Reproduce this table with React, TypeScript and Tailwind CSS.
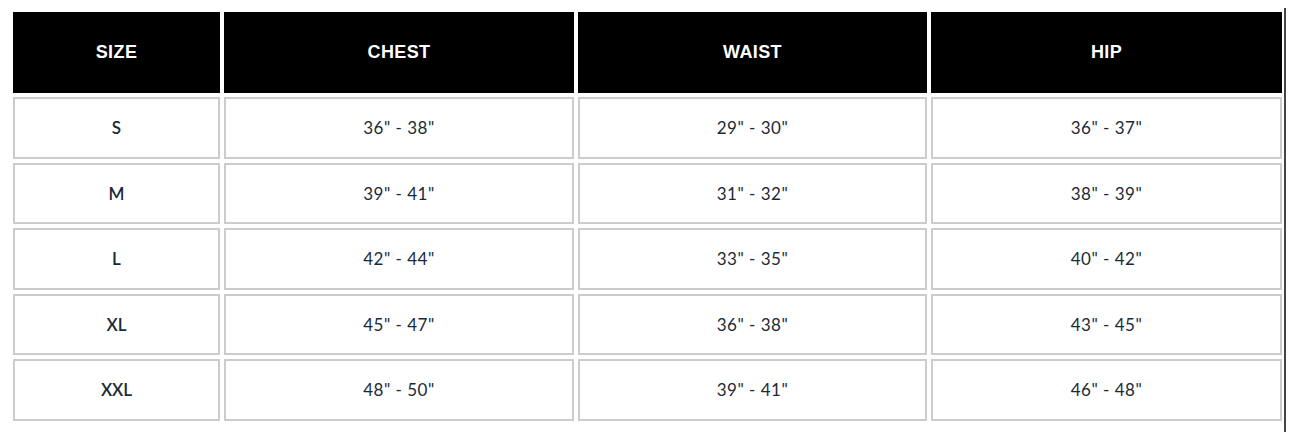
const sizes = [
  { size: 'S', chest: '36" - 38"', waist: '29" - 30"', hip: '36" - 37"' },
  { size: 'M', chest: '39" - 41"', waist: '31" - 32"', hip: '38" - 39"' },
  { size: 'L', chest: '42" - 44"', waist: '33" - 35"', hip: '40" - 42"' },
  { size: 'XL', chest: '45" - 47"', waist: '36" - 38"', hip: '43" - 45"' },
  { size: 'XXL', chest: '48" - 50"', waist: '39" - 41"', hip: '46" - 48"' },
];

const headers = ['SIZE', 'CHEST', 'WAIST', 'HIP'];

export default function App() {
  return (
    <div className="bg-white min-h-[432px] pt-2">
      {/* chart wrapper, dark edge on the right */}
      <div className="w-[1286px] min-h-[424px] border-r-2 border-[#454545] pl-[9px]">
        <table className="w-[1277px] table-fixed border-separate border-spacing-1">
          <colgroup>
            <col className="w-[207px]" />
            <col className="w-[350px]" />
            <col className="w-[349px]" />
            <col className="w-[351px]" />
          </colgroup>
          <thead>
            <tr>
              {headers.map((h) => (
                <th
                  key={h}
                  className="h-[81px] bg-black text-white text-center align-middle font-bold text-[18px] tracking-[0.4px] font-['Liberation_Sans',Arial,sans-serif]"
                >
                  {h}
                </th>
              ))}
            </tr>
          </thead>
          <tbody className="font-['Lato','Noto_Sans',sans-serif] text-[#1b2a38] text-[17px]">
            {sizes.map((row) => (
              <tr key={row.size}>
                <td className="h-[61.5px] border-2 border-[#cccccc] text-center align-middle font-semibold text-[17px]">
                  {row.size}
                </td>
                <td className="h-[61.5px] border-2 border-[#cccccc] text-center align-middle tracking-[0.5px]">
                  {row.chest}
                </td>
                <td className="h-[61.5px] border-2 border-[#cccccc] text-center align-middle tracking-[0.5px]">
                  {row.waist}
                </td>
                <td className="h-[61.5px] border-2 border-[#cccccc] text-center align-middle tracking-[0.5px]">
                  {row.hip}
                </td>
              </tr>
            ))}
          </tbody>
        </table>
      </div>
    </div>
  );
}
